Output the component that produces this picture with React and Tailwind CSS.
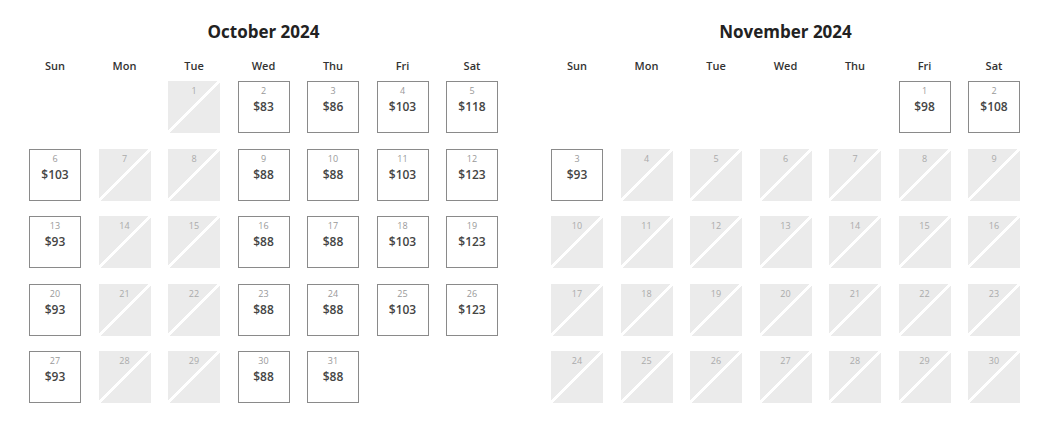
import React from "react";

const octPrices = {
  2: "$83", 3: "$86", 4: "$103", 5: "$118",
  6: "$103", 9: "$88", 10: "$88", 11: "$103", 12: "$123",
  13: "$93", 16: "$88", 17: "$88", 18: "$103", 19: "$123",
  20: "$93", 23: "$88", 24: "$88", 25: "$103", 26: "$123",
  27: "$93", 30: "$88", 31: "$88",
};
const novPrices = { 1: "$98", 2: "$108", 3: "$93" };

const days = ["Sun", "Mon", "Tue", "Wed", "Thu", "Fri", "Sat"];

function Cell({ day, price }) {
  if (price) {
    return (
      <div className="w-[52px] h-[52px] border border-[#8a8a8a] bg-white flex flex-col items-center">
        <div className="text-[9px] leading-[12px] mt-[3px] text-[#999]">{day}</div>
        <div className="text-[12px] leading-[16px] mt-[2px] font-semibold text-[#444]">{price}</div>
      </div>
    );
  }
  return (
    <div className="w-[52px] h-[52px] flex flex-col items-center bg-[linear-gradient(to_bottom_right,#ebebeb_calc(50%-1.5px),#ffffff_calc(50%-1.5px),#ffffff_calc(50%+1px),#ebebeb_calc(50%+1px))]">
      <div className="text-[9px] leading-[12px] mt-[4px] text-[#aaa]">{day}</div>
    </div>
  );
}

function Month({ title, startDay, numDays, prices }) {
  const cells = [];
  for (let i = 0; i < startDay; i++) cells.push(<div key={"e" + i} className="w-[52px] h-[52px]" />);
  for (let d = 1; d <= numDays; d++) cells.push(<Cell key={d} day={d} price={prices[d]} />);
  return (
    <div className="w-[469px] flex flex-col">
      <div className="text-center text-[17px] leading-[24px] font-bold text-[#222]">{title}</div>
      <div className="grid grid-cols-[repeat(7,52px)] gap-x-[17.5px] mt-[14px]">
        {days.map((d) => (
          <div key={d} className="text-center text-[11px] leading-[16px] font-semibold text-[#333]">{d}</div>
        ))}
      </div>
      <div className="grid grid-cols-[repeat(7,52px)] gap-x-[17.5px] gap-y-[15.5px] mt-[7px]">
        {cells}
      </div>
    </div>
  );
}

export default function App() {
  return (
    <div className="w-[1047px] h-[432px] bg-white flex justify-between pl-[29px] pr-[27px] pt-[20px] font-['Open_Sans',sans-serif]">
      <Month title="October 2024" startDay={2} numDays={31} prices={octPrices} />
      <Month title="November 2024" startDay={5} numDays={30} prices={novPrices} />
    </div>
  );
}
